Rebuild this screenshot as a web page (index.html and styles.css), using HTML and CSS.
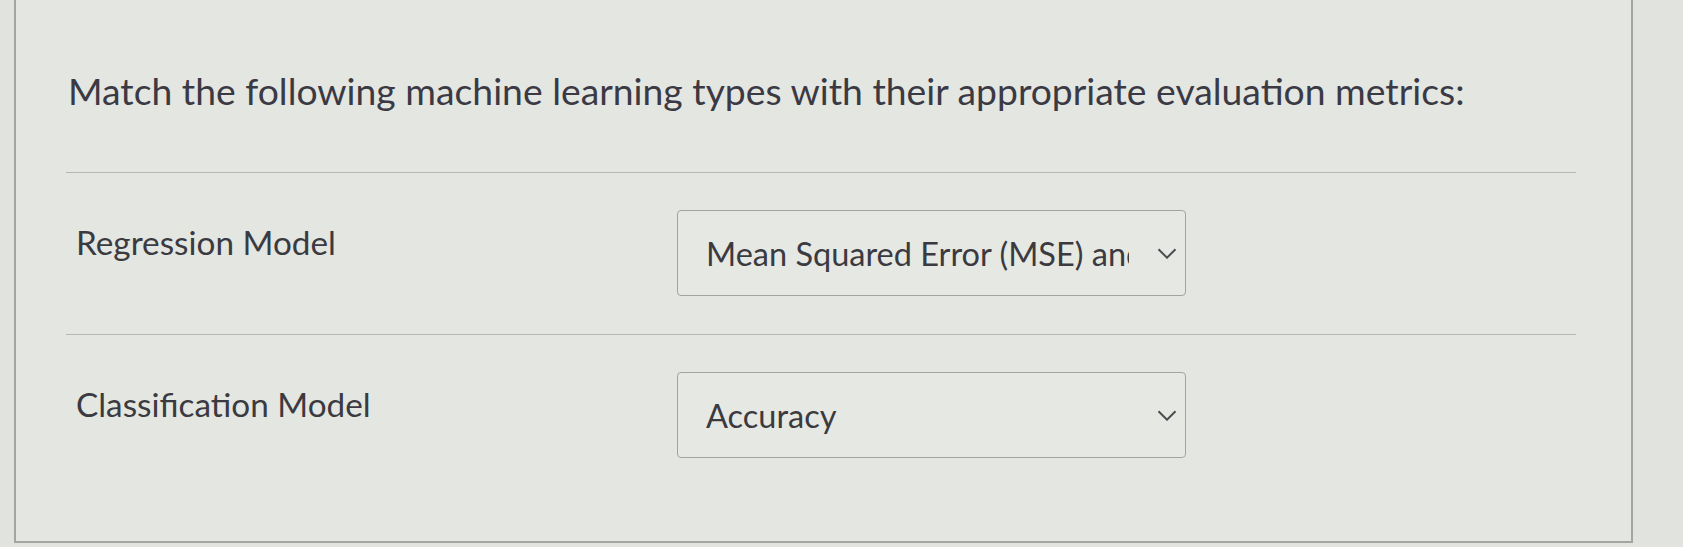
FILE: index.html
```html
<!DOCTYPE html>
<html><head><meta charset="utf-8"><title>Matching question</title><link rel="stylesheet" href="styles.css"></head>
<body>
<div class="card">
  <h1 class="title">Match the following machine learning types with their appropriate evaluation metrics:</h1>
  <div class="rows">
    <div class="row">
      <div class="label">Regression Model</div>
      <div class="select"><span class="value">Mean Squared Error (MSE) and Root Mean Squared Error</span>
        <svg class="chev" viewBox="0 0 20 11" width="20" height="11"><path d="M1.5 1.2 L10 9.7 L18.5 1.2" fill="none" stroke="#4c4d52" stroke-width="2"/></svg></div>
    </div>
    <div class="row">
      <div class="label">Classification Model</div>
      <div class="select"><span class="value">Accuracy</span>
        <svg class="chev" viewBox="0 0 20 11" width="20" height="11"><path d="M1.5 1.2 L10 9.7 L18.5 1.2" fill="none" stroke="#4c4d52" stroke-width="2"/></svg></div>
    </div>
  </div>
</div>
</body></html>
```
FILE: styles.css
```css
html, body { margin: 0; padding: 0; }
body { background: #e1e3df; font-family: Lato, "Noto Sans", sans-serif; color: #3a3a40; width: 1683px; height: 547px; overflow: hidden; }
.card { margin-left: 14px; width: 1619px; height: 543px; box-sizing: border-box; background: #e4e6e2; border: 2px solid #a3a5a2; border-top: none; padding-left: 50px; }
.title { margin: 0; padding: 67px 0 0 2px; font-weight: 400; font-size: 37.3px; line-height: 48px; height: 105px; color: #3b3a44; white-space: nowrap; }
.rows { width: 1510px; }
.row { border-top: 1px solid #b6b8b5; display: grid; grid-template-columns: 601px 509px; padding: 37px 0 0 10px; height: 124px; }
.label { font-size: 33.3px; padding-top: 12px; }
.select { height: 86px; box-sizing: border-box; border: 1.5px solid #a2a4a2; border-radius: 4px; display: flex; align-items: center; padding-left: 28px; background: #e6e8e4; }
.value { font-size: 32.5px; width: 423px; overflow: hidden; white-space: nowrap; }
.chev { margin-left: 28px; flex: none; }
```
